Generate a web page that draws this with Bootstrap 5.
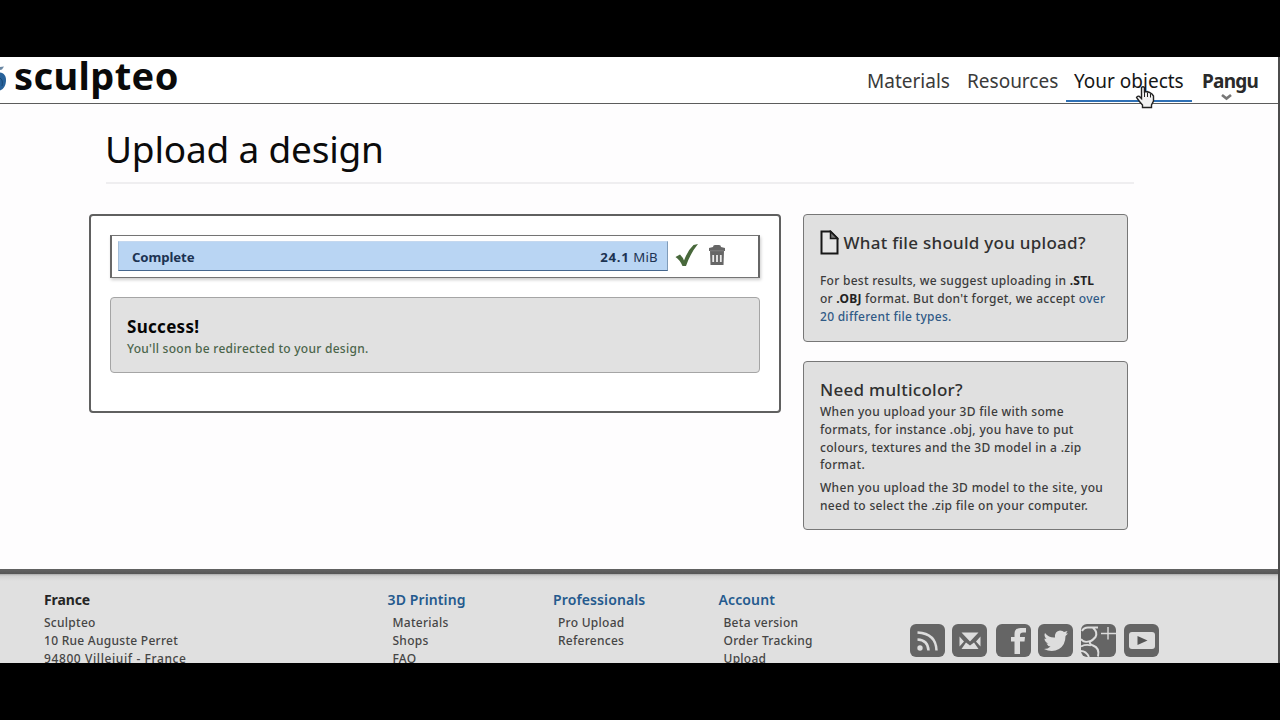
<!DOCTYPE html>
<html lang="en">
<head>
<meta charset="utf-8">
<meta name="viewport" content="width=device-width, initial-scale=1">
<title>Sculpteo - Upload a design</title>
<link href="https://cdn.jsdelivr.net/npm/bootstrap@5.3.0/dist/css/bootstrap.min.css" rel="stylesheet">
<style>
body{background:#000;font-family:"Noto Sans","Open Sans",sans-serif;height:720px;overflow:hidden;padding:57px 0}
.screen{height:606px;background:#fefdfe;border-right:2px solid #4c4c4c;overflow:hidden}
.topbar{height:47px;border-bottom:1px solid #5c5c5c;background:#fff}
.logo-mark{width:7px;height:28px;margin-top:8px}
.brand-name{font-size:38px;font-weight:700;line-height:52px;height:46px;letter-spacing:.4px;color:#0a0a0a;margin:-8px 0 0 7px}
.topnav{width:411px}
.topnav .nav-link{font-size:19px;line-height:26px;color:#3a3a3a;padding:11px 0 0;white-space:nowrap}
.topnav .nav-link.current{color:#161616;height:45px;width:126px;padding-left:8px;border-bottom:2px solid #2f70b5}
.topnav .nav-link.user{letter-spacing:-.75px;color:#2a2a2a}
.cursor{top:28px;left:67px}
.caret{left:19px;top:36px}
.content{height:465px;padding-left:89px}
.page-title{width:1028px;margin:0 0 0 17px;padding-top:20px;height:80px;font-size:37px;line-height:50px;font-weight:400;letter-spacing:-.2px;text-indent:-1px;color:#0b0b0b;border-bottom:2px solid #efeef0}
.upload-panel{width:692px;height:199px;margin-top:30px;border:2px solid #606060;border-radius:4px;padding:19px 19px 0;background:#fff}
.file-row{height:43px;border:1px solid #747474;border-left:2px solid #686868;border-right:2px solid #666;padding:5px 0 0 6px;box-shadow:1px 2px 3px #0003}
.done-bar{width:550px;height:30px;background:#b9d5f3;border:1px solid #a5bfda;border-top-color:#c4d8ef;border-bottom-color:#44668d;border-right-color:#7f9bb8;padding:3px 9px 0 13px;font-size:13.2px;line-height:24px;color:#1c3352}
.notice{margin-top:19px;height:76px;border:1px solid #a5a5a5;border-radius:4px;background:#e1e1e1;padding:17px 16px}
.notice h2{font-size:17px;line-height:24px;font-weight:700;letter-spacing:.3px;color:#050505;margin:0}
.notice p{font-size:12px;line-height:20px;font-weight:500;letter-spacing:.27px;color:#4b654b;margin:0}
.side{width:325px;margin:30px 0 0 22px}
.tip{border:1px solid #777;border-radius:4px;background:#e0e0e0;padding:16px 0 0 16px;color:#3c3c3c;font-size:12px;line-height:17.8px;font-weight:500;letter-spacing:.31px;white-space:nowrap}
.tip h3{font-size:17px;line-height:24px;font-weight:500;letter-spacing:.27px;color:#303030;margin:0}
.tip p{margin:0}
.tip b{color:#222}
.tip a{color:#305a86;text-decoration:none}
.tip-files{height:128px}
.tip-files p{margin-top:17px;letter-spacing:.27px}
.tip-color{height:169px;margin-top:19px}
.tip-color h3{margin-bottom:1px}
.tip-color p+p{margin-top:5px}
.site-footer{height:94px;background:linear-gradient(#626262 0,#555 5px,#a9a9a9 5px,#d2d2d2 7px,#e0e0e0 12px);color:#454545;font-size:12px;line-height:18px;font-weight:500;letter-spacing:.27px;padding:19px 0 0 44px;white-space:nowrap}
.site-footer h4{font-size:14px;line-height:23px;font-weight:600;color:#245a8e;margin:0 0 3.400px;letter-spacing:.12px}
.site-footer .office h4{color:#252525;font-weight:700;letter-spacing:-.1px}
.office{width:343.500px}.foot-col{width:165.5px}
.foot-col div{padding-left:5px}
.social{margin:36px 0 0 26px}
.social svg{display:block;width:35px;height:34px}
</style>
</head>
<body>
<div class="screen">
  <header class="topbar d-flex justify-content-between">
    <div class="d-flex">
      <svg class="logo-mark" viewBox="0 0 7 28"><path d="M0 2L4 1.500L2 4.500L0 5Z" fill="#6a87a3"/><path d="M0 7.500C4 8 6 11 6 15C6 20 4 24 0 25.500Z" fill="#28629a"/><path d="M0 13C2 14 3 17 2 21" stroke="#174775" fill="none"/></svg>
      <div class="brand-name">sculpteo</div>
    </div>
    <nav class="topnav nav flex-nowrap">
      <a class="nav-link" style="width:100px">Materials</a>
      <a class="nav-link" style="width:99px">Resources</a>
      <div class="position-relative">
        <a class="nav-link current">Your objects</a>
        <svg class="cursor position-absolute" width="22" height="24" viewBox="0 0 22 24"><path d="M8.500 2.500Q10 1 11.500 2.500V7L14 6.500L16.500 7.500L19 9L20.500 11V16L18.500 20V22.500H9.500V20L6.500 16.500L3.500 12.500Q4.500 10.500 6.500 11.500L8.500 13.500Z" fill="#f2f2f2" stroke="#222" stroke-width="1.4"/><path d="M11.500 7V12M14.500 7.500V12M17.500 8.500V12.500" stroke="#222" fill="none"/></svg>
      </div>
      <div class="position-relative" style="margin-left:10px">
        <a class="nav-link user fw-bold">Pangu</a>
        <svg class="caret position-absolute" width="11" height="8" viewBox="0 0 11 8"><path d="M1 2L5.500 5.500L10 2" fill="none" stroke="#777" stroke-width="2.700"/></svg>
      </div>
    </nav>
  </header>

  <main class="content">
    <h1 class="page-title">Upload a design</h1>
    <div class="d-flex align-items-start">
      <section class="upload-panel">
        <div class="file-row d-flex">
          <div class="done-bar d-flex justify-content-between"><b style="letter-spacing:-.1px">Complete</b><span style="letter-spacing:.3px"><b style="letter-spacing:.7px">24.1</b> MiB</span></div>
          <svg style="margin:1px 0 0 6px" width="25" height="26" viewBox="0 0 25 26"><path d="M1.500 15L6 12.500Q9 15.500 10 18.500Q14 8 19.500 3L24 2Q16.500 11 12 24H8.500Q6 18 1.500 15Z" fill="#48683b"/></svg>
          <svg style="margin:3px 0 0 9px" width="18" height="22" viewBox="0 0 18 22"><path d="M5 3Q5 1 7 1H11Q13 1 13 3L17 4V7H1V4Z" fill="#666"/><path d="M2 7H16L15.500 21H2.500Z" fill="#666"/><path d="M2 6.800H16" stroke="#808080"/><path d="M5.200 11V18M9 11V18M12.800 11V18" stroke="#ececec" stroke-width="1.800"/></svg>
        </div>
        <div class="notice">
          <h2>Success!</h2>
          <p>You'll soon be redirected to your design.</p>
        </div>
      </section>
      <aside class="side">
        <section class="tip tip-files">
          <div class="d-flex">
            <svg width="19" height="25" viewBox="0 0 19 25" style="margin-top:-1px"><path d="M1.500 1.500H10.500L17.500 8.500V23.500H1.500Z" fill="#e6e6e6" stroke="#181818" stroke-width="2"/><path d="M10.500 1.500V8.500H17.500Z" fill="#777" stroke="#181818" stroke-width="1.500"/></svg>
            <h3 style="margin-left:4.500px">What file should you upload?</h3>
          </div>
          <p>For best results, we suggest uploading in <b>.STL</b><br>or <b>.OBJ</b> format. But don't forget, we accept <a href="#">over<br>20 different file types.</a></p>
        </section>
        <section class="tip tip-color">
          <h3>Need multicolor?</h3>
          <p>When you upload your 3D file with some<br>formats, for instance .obj, you have to put<br>colours, textures and the 3D model in a .zip<br>format.</p>
          <p>When you upload the 3D model to the site, you<br>need to select the .zip file on your computer.</p>
        </section>
      </aside>
    </div>
  </main>

  <footer class="site-footer d-flex">
    <div class="office"><h4>France</h4><div>Sculpteo<br>10 Rue Auguste Perret<br><span style="letter-spacing:.6px">94800 Villejuif - France</span></div></div>
    <div class="foot-col"><h4>3D Printing</h4><div>Materials<br>Shops<br>FAQ</div></div>
    <div class="foot-col"><h4>Professionals</h4><div>Pro Upload<br>References</div></div>
    <div class="foot-col"><h4>Account</h4><div>Beta version<br>Order Tracking<br>Upload</div></div>
    <div class="social d-flex">
      <svg viewBox="0 0 35 34" style="margin-right:7px"><rect width="35" height="33" rx="6" fill="#656565"/><circle cx="10" cy="24" r="2.700" fill="#ddd"/><path d="M7.500 15.500Q18 16 18.500 26.500M7.500 8.500Q26 9.500 26.500 26.500" fill="none" stroke="#ddd" stroke-width="2.500"/></svg>
      <svg viewBox="0 0 35 34" style="margin-right:9px"><rect width="35" height="33" rx="6" fill="#656565"/><path d="M9.500 8.500H26.500L18 17.500ZM7.500 12.500L12 17.500L7.500 22.500ZM28.500 12.500L24 17.500L28.500 22.500ZM9.500 25L14 18.500L18 21.500L22 18.500L26.500 25Z" fill="#ddd"/></svg>
      <svg viewBox="0 0 35 34" style="margin-right:7px"><rect width="35" height="33" rx="6" fill="#656565"/><path d="M30 4V8.500H27Q24 8.500 24 11V13H29L28.500 17.500H24V30H18.500V17.500H15V13H18.500V10Q18.500 4 24.500 4Z" fill="#ddd"/></svg>
      <svg viewBox="0 0 35 34" style="margin-right:8px"><rect width="35" height="33" rx="6" fill="#656565"/><path d="M7 9Q11 14 17 13.500Q16.500 7 22 6.500Q25 6.500 26 8L29.500 7L28 9.500L30 9.500L27.500 12Q27.500 21 21 25Q14 29 6 25Q10 25 12.500 22.500Q9.500 22 8.500 19.500H10.500Q6.500 18 6.500 14.500L8.500 15Q5.500 12 7 9Z" fill="#ddd"/></svg>
      <svg viewBox="0 0 35 34" style="margin-right:8px"><rect width="35" height="33" rx="6" fill="#656565"/><g fill="none" stroke="#ddd"><path d="M1 7Q3 3 8 3.500H17M12 4Q17 8 14.500 13Q12 16 9 17.500Q8 20 12 21.500Q19 24 17 32.500" stroke-width="2"/><path d="M0 15Q3 19.500 9 17M0 22.500Q5 20 10 21.500M0 27Q5 27 8 33" stroke-width="1.800"/><path d="M20 9.500H35M27 3V15.500" stroke-width="1.400"/></g></svg>
      <svg viewBox="0 0 35 34"><rect width="35" height="33" rx="6" fill="#656565"/><rect x="5" y="8" width="26" height="17" rx="3" fill="#ddd"/><path d="M13.500 12V21L23.500 16.500Z" fill="#555"/></svg>
    </div>
  </footer>
</div>
<script src="https://cdn.jsdelivr.net/npm/bootstrap@5.3.0/dist/js/bootstrap.bundle.min.js"></script>
</body>
</html>
